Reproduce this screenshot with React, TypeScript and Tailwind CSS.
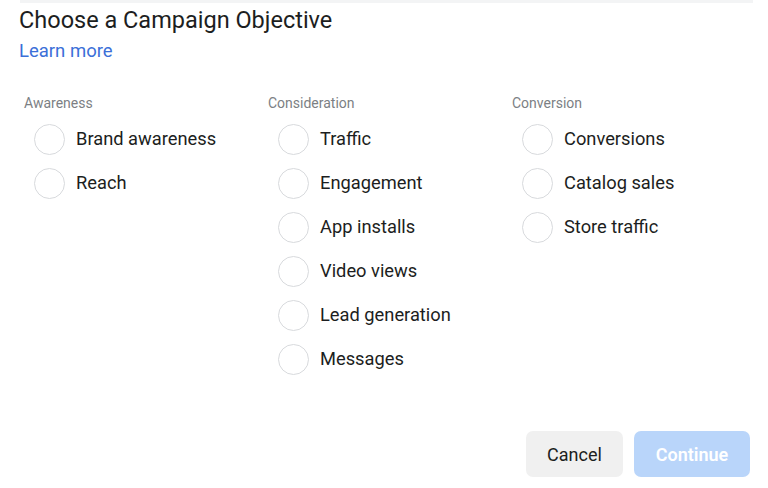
const columns = [
  { title: 'Awareness', items: ['Brand awareness', 'Reach'] },
  {
    title: 'Consideration',
    items: ['Traffic', 'Engagement', 'App installs', 'Video views', 'Lead generation', 'Messages'],
  },
  { title: 'Conversion', items: ['Conversions', 'Catalog sales', 'Store traffic'] },
];

export default function App() {
  return (
    <div className="w-[768px] h-[488px] bg-white overflow-hidden font-['Roboto','Liberation_Sans',sans-serif] text-[#1c1e21]">
      <div className="h-[3px] ml-5 mr-[15px] bg-[#f3f4f5]" />

      <div className="pl-[19px] pt-[4px]">
        <h1 className="text-[23.5px] leading-[27px] font-normal">Choose a Campaign Objective</h1>
        <a href="#" className="block mt-[6px] text-[18.5px] leading-[22px] text-[#3b6fd8]">
          Learn more
        </a>
      </div>

      <div className="grid grid-cols-[244px_244px_244px] pl-6 mt-8">
        {columns.map((col) => (
          <div key={col.title}>
            <div className="text-[14px] leading-[18px] text-[#7c7f84]">{col.title}</div>
            <ul className="mt-[5px]">
              {col.items.map((item) => (
                <li key={item} className="flex items-center h-[44px] pl-[10px] gap-[11px]">
                  <span className="w-[31px] h-[31px] rounded-full border border-[#d8dadd] bg-white shrink-0" />
                  <span className="text-[18.3px] leading-[22px]">{item}</span>
                </li>
              ))}
            </ul>
          </div>
        ))}
      </div>

      <div className="flex justify-end gap-[11px] pr-[18px] mt-[50px]">
        <button className="w-[97px] h-[46px] rounded-[7px] bg-[#f0f0f0] text-[18px] text-[#1c1e21]">
          Cancel
        </button>
        <button className="w-[116px] h-[46px] rounded-[7px] bg-[#b9d5fa] text-[18px] font-semibold text-white">
          Continue
        </button>
      </div>
    </div>
  );
}
